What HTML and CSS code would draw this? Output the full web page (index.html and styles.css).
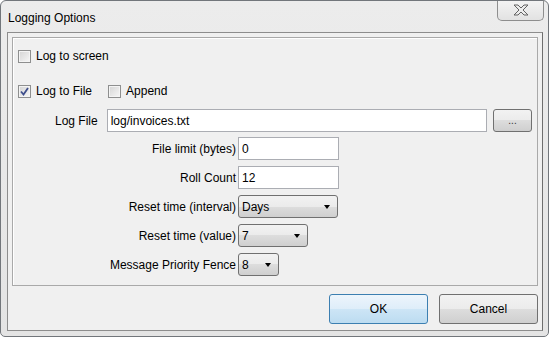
FILE: index.html
```html
<!DOCTYPE html>
<html lang="en">
<head>
    <meta charset="UTF-8">
    <title>Logging Options</title>
    <link rel="stylesheet" href="styles.css">
</head>
<body>
    <div class="window">
        <div class="titlebar">
            <span class="title">Logging Options</span>
            <button type="button" class="close" title="Close">
                <svg width="16" height="12" viewBox="-1 -1 16 12">
                    <polygon points="0,0 4,0 7,3 10,0 14,0 9,5 14,10 10,10 7,7 4,10 0,10 5,5" fill="#ececec" stroke="#626262" stroke-width="1" stroke-linejoin="round"/>
                </svg>
            </button>
        </div>
        <div class="client">
            <div class="panel">
                <div class="row row-screen">
                    <label class="check"><span class="box"></span>Log to screen</label>
                </div>
                <div class="row row-file">
                    <label class="check"><span class="box">
                        <svg width="11" height="11" viewBox="0 0 11 11"><path d="M2 5.5 L4.5 8.5 L9 2" fill="none" stroke="#3f4f8c" stroke-width="1.8"/></svg>
                    </span>Log to File</label>
                    <label class="check"><span class="box"></span>Append</label>
                </div>
                <div class="row row-logfile">
                    <span class="label">Log File</span>
                    <input class="field grow" type="text" value="log/invoices.txt">
                    <button type="button" class="btn browse">...</button>
                </div>
                <div class="form">
                    <span class="label">File limit (bytes)</span>
                    <input class="field w-101" type="text" value="0">

                    <span class="label">Roll Count</span>
                    <input class="field w-101" type="text" value="12">

                    <span class="label">Reset time (interval)</span>
                    <div class="combo w-100"><span>Days</span><span class="arrow"></span></div>

                    <span class="label">Reset time (value)</span>
                    <div class="combo w-70"><span>7</span><span class="arrow"></span></div>

                    <span class="label">Message Priority Fence</span>
                    <div class="combo w-41"><span>8</span><span class="arrow"></span></div>
                </div>
            </div>
            <div class="buttons">
                <button type="button" class="btn dialog-btn ok">OK</button>
                <button type="button" class="btn dialog-btn">Cancel</button>
            </div>
        </div>
    </div>
</body>
</html>
```

FILE: styles.css
```css
html, body {
    margin: 0;
}
body {
    width: 549px;
    height: 337px;
    overflow: hidden;
    font: 12px "Liberation Sans", Arial, sans-serif;
    color: #000;
    background: #fff;
}

.window {
    box-sizing: border-box;
    width: 549px;
    height: 337px;
    border: 1px solid #72767b;
    border-radius: 6px 6px 5px 5px;
    background: linear-gradient(#ececec, #e4e4e4);
    display: flex;
    flex-direction: column;
    overflow: hidden;
}

.titlebar {
    height: 31px;
    display: flex;
    align-items: center;
    padding-left: 7px;
}
.title {
    flex: 1;
    padding-top: 2px;
}
.close {
    align-self: flex-start;
    box-sizing: border-box;
    width: 47px;
    height: 21px;
    margin: -1px 4px 0 0;
    padding: 0;
    border: 1px solid #8e8e8e;
    border-top: none;
    border-radius: 0 0 5px 5px;
    background: linear-gradient(#f4f4f4, #e2e2e2);
    display: flex;
    align-items: center;
    justify-content: center;
}

.client {
    box-sizing: border-box;
    height: 299px;
    margin: 0 5px 0 6px;
    border: 1px solid #8d8d8d;
    border-right-color: #6e6e6e;
    background: #f0f0f0;
    padding: 4px;
    display: flex;
    flex-direction: column;
}

.panel {
    box-sizing: border-box;
    height: 249px;
    border: 1px solid #a9a9a9;
    box-shadow: inset 1px 1px 0 #fff;
    padding-top: 7px;
}

.row {
    display: flex;
    align-items: center;
    height: 22px;
}
.row-screen {
    padding-left: 5px;
}
.row-file {
    margin-top: 13px;
    padding-left: 5px;
    gap: 16px;
}
.row-logfile {
    margin-top: 7px;
    height: 23px;
    padding: 0 5px 0 42px;
}
.row-logfile .label {
    margin-right: 9px;
}

.check {
    display: flex;
    align-items: center;
    gap: 5px;
}
.box {
    box-sizing: border-box;
    width: 13px;
    height: 13px;
    border: 1px solid #8e8f8f;
    background: linear-gradient(135deg, #d4d4d4, #f7f7f7);
    box-shadow: inset 0 0 0 1px #f4f4f4;
    display: flex;
    align-items: center;
    justify-content: center;
}

.field {
    box-sizing: border-box;
    height: 23px;
    margin: 0;
    padding: 0 3px;
    border: 1px solid #abadb3;
    background: #fff;
    font: inherit;
    color: #000;
    outline: none;
}
.grow {
    flex: 1;
    min-width: 0;
}

.btn {
    box-sizing: border-box;
    margin: 0;
    padding: 0;
    border: 1px solid #707070;
    border-radius: 3px;
    background: linear-gradient(#f2f2f2, #ebebeb 50%, #dddddd 50%, #cfcfcf);
    font: inherit;
    color: #000;
}
.browse {
    width: 39px;
    height: 23px;
    margin-left: 6px;
    font-size: 10px;
    color: #333;
}

.form {
    margin-top: 5px;
    display: grid;
    grid-template-columns: 223px auto;
    grid-auto-rows: 23px;
    column-gap: 2px;
    row-gap: 6px;
    align-items: center;
    justify-items: start;
}
.form .label {
    justify-self: end;
}

.combo {
    box-sizing: border-box;
    height: 23px;
    padding-left: 3px;
    border: 1px solid #707070;
    border-radius: 3px;
    background: linear-gradient(#f2f2f2, #ebebeb 50%, #dddddd 50%, #cfcfcf);
    display: flex;
    align-items: center;
}
.arrow {
    margin: 1px 7px 0 auto;
    width: 0;
    height: 0;
    border-style: solid;
    border-width: 4px 3.5px 0;
    border-color: #000 transparent transparent;
}

.w-101 { width: 101px; }
.w-100 { width: 100px; }
.w-70 { width: 70px; }
.w-41 { width: 41px; }

.buttons {
    flex: 1;
    display: flex;
    justify-content: flex-end;
    align-items: flex-start;
    gap: 11px;
    padding-top: 8px;
}
.dialog-btn {
    width: 99px;
    height: 30px;
}
.ok {
    border-color: #3c7fb1;
    background: linear-gradient(#edf5fc, #deedf9 50%, #cde5f6 50%, #bcdcf1);
}
```
